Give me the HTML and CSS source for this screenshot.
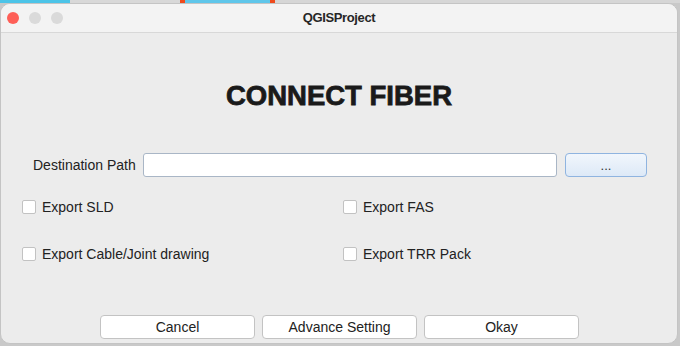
FILE: index.html
```html
<!DOCTYPE html>
<html lang="en">
<head>
    <meta charset="UTF-8">
    <title>QGISProject</title>
    <link rel="stylesheet" href="styles.css">
</head>
<body>
    <div class="backdrop"></div>
    <div class="window">
        <div class="titlebar">
            <div class="lights">
                <span class="light red"></span>
                <span class="light"></span>
                <span class="light"></span>
            </div>
            <div class="title">QGISProject</div>
        </div>
        <div class="content">
            <h1>CONNECT FIBER</h1>
            <div class="path-row">
                <label class="path-label">Destination Path</label>
                <input type="text" class="path-input">
                <button class="browse-btn">...</button>
            </div>
            <div class="options">
                <label class="option"><span class="box"></span>Export SLD</label>
                <label class="option"><span class="box"></span>Export FAS</label>
                <label class="option"><span class="box"></span>Export Cable/Joint drawing</label>
                <label class="option"><span class="box"></span>Export TRR Pack</label>
            </div>
            <div class="actions">
                <button class="btn">Cancel</button>
                <button class="btn">Advance Setting</button>
                <button class="btn">Okay</button>
            </div>
        </div>
    </div>
</body>
</html>
```

FILE: styles.css
```css
body {
    margin: 0;
    padding: 0;
    background-color: #c9c9c9;
    font-family: "Liberation Sans", Arial, sans-serif;
    color: #222222;
    width: 680px;
    height: 346px;
    overflow: hidden;
    position: relative;
}
.backdrop {
    height: 3px;
    background: linear-gradient(to right, #4cc4e8 0 70px, #d8d8d8 70px 180px, #ef4a1c 180px 185px, #5fc6ea 185px 270px, #ef4a1c 270px 275px, #d6d6d6 275px);
}
.window {
    width: 676px;
    height: 339px;
    background-color: #ececec;
    border: 1px solid #c4c4c4;
    border-radius: 10px;
    overflow: hidden;
    display: flex;
    flex-direction: column;
}
.titlebar {
    height: 28px;
    background-color: #f3f3f3;
    border-bottom: 1px solid #d8d8d8;
    display: flex;
    align-items: center;
    position: relative;
}
.lights {
    display: flex;
    gap: 10px;
    padding-left: 6px;
}
.light {
    width: 12px;
    height: 12px;
    border-radius: 50%;
    background-color: #dadada;
}
.light.red {
    background-color: #fe5f57;
}
.title {
    position: absolute;
    left: 0;
    right: 0;
    top: 6px;
    text-align: center;
    font-size: 13px;
    font-weight: bold;
    letter-spacing: -0.35px;
    color: #262626;
}
.content {
    flex: 1;
    display: flex;
    flex-direction: column;
}
h1 {
    margin: 47px 0 0;
    text-align: center;
    font-size: 27.5px;
    line-height: 32px;
    font-weight: 900;
    color: #1a1a1a;
    -webkit-text-stroke: 0.8px #1a1a1a;
}
.path-row {
    display: flex;
    align-items: center;
    margin-top: 41px;
    height: 24px;
}
.path-label {
    font-size: 14px;
    margin-left: 32px;
    width: 110px;
}
.path-input {
    width: 414px;
    height: 24px;
    box-sizing: border-box;
    border: 1px solid #a9b6c6;
    border-radius: 3px;
    background-color: #ffffff;
    margin: 0;
    padding: 0 4px;
}
.browse-btn {
    margin-left: 8px;
    width: 82px;
    height: 24px;
    box-sizing: border-box;
    border: 1px solid #8fb4e0;
    border-radius: 4px;
    background: linear-gradient(#f1f6fc, #dde9f7);
    font-family: "Liberation Sans", Arial, sans-serif;
    font-size: 13px;
    color: #333333;
    padding: 0;
}
.options {
    display: grid;
    grid-template-columns: 321px 1fr;
    grid-auto-rows: 47px;
    margin: 6px 0 0 21px;
}
.option {
    display: flex;
    align-items: center;
    font-size: 14px;
    color: #222222;
    height: 47px;
}
.box {
    width: 12px;
    height: 12px;
    background-color: #ffffff;
    border: 1px solid #c2c2c2;
    border-radius: 2px;
    margin-right: 6px;
}
.actions {
    display: flex;
    gap: 7px;
    margin: 38px 0 0 99px;
}
.btn {
    width: 155px;
    height: 24px;
    box-sizing: border-box;
    background-color: #ffffff;
    border: 1px solid #c3c3c3;
    border-radius: 4px;
    font-family: "Liberation Sans", Arial, sans-serif;
    font-size: 14px;
    color: #222222;
    padding: 0;
}
```
